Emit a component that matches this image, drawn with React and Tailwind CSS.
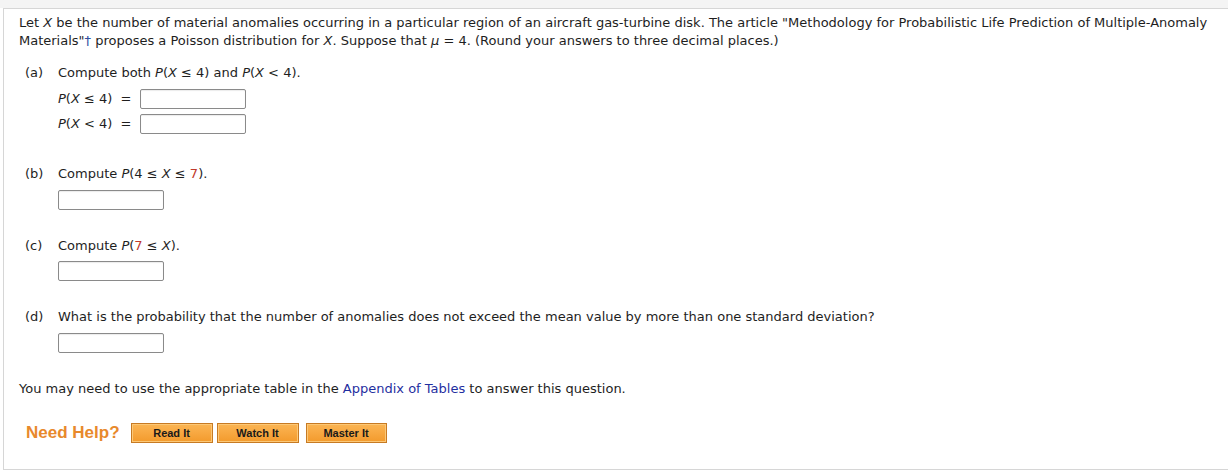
import React from "react";

const V = { fontFamily: '"DejaVu Sans", Verdana, sans-serif' };

function Box({ className = "" }) {
  return (
    <div
      className={
        "h-[20px] w-[106px] border border-[#8a8a8a] rounded-[2px] bg-white shadow-[inset_0_1px_1px_rgba(0,0,0,0.08)] " +
        className
      }
    />
  );
}

function Btn({ children, w, className = "" }) {
  return (
    <div
      className={
        "h-[20px] flex items-center justify-center border border-[#c77a23] bg-gradient-to-b from-[#fbb553] to-[#f39a2b] shadow-[inset_0_0_0_1px_#fcc877] text-[11px] font-bold text-[#1a1a1a] " +
        className
      }
      style={{ width: w, fontFamily: '"Liberation Sans", Arial, sans-serif' }}
    >
      {children}
    </div>
  );
}

export default function App() {
  return (
    <div className="w-[1228px] h-[476px] bg-white text-[#1e1e1e] text-[13px] leading-[18px]" style={V}>
      <div className="h-[8px] bg-[#f4f4f4]" />
      <div className="ml-[3px] h-[462px] border-t border-l border-b border-[#d6d6d6] bg-white">
        <div className="pl-[15px] pt-[5px] pr-[4px]">
          <p>
            Let <i>X</i> be the number of material anomalies occurring in a particular region of an aircraft gas-turbine disk. The article "Methodology for Probabilistic Life Prediction of Multiple-Anomaly Materials"<span className="text-[#3050a0]">†</span> proposes a Poisson distribution for <i>X</i>. Suppose that <i>μ</i> = 4. (Round your answers to three decimal places.)
          </p>
        </div>

        <div className="pl-[21px] mt-[14px]">
          <div className="flex">
            <span className="w-[33px]">(a)</span>
            <span>
              Compute both <i>P</i>(<i>X</i> ≤ 4) and <i>P</i>(<i>X</i> &lt; 4).
            </span>
          </div>
          <div className="pl-[33px] mt-[7px] flex flex-col gap-[5px]">
            <div className="flex items-center">
              <span className="w-[82px]">
                <i>P</i>(<i>X</i> ≤ 4) &nbsp;=
              </span>
              <Box />
            </div>
            <div className="flex items-center">
              <span className="w-[82px]">
                <i>P</i>(<i>X</i> &lt; 4) &nbsp;=
              </span>
              <Box />
            </div>
          </div>

          <div className="flex mt-[31px]">
            <span className="w-[33px]">(b)</span>
            <span>
              Compute <i>P</i>(4 ≤ <i>X</i> ≤ <span className="text-[#c0392b]">7</span>).
            </span>
          </div>
          <Box className="ml-[33px] mt-[7px]" />

          <div className="flex mt-[27px]">
            <span className="w-[33px]">(c)</span>
            <span>
              Compute <i>P</i>(<span className="text-[#c0392b]">7</span> ≤ <i>X</i>).
            </span>
          </div>
          <Box className="ml-[33px] mt-[6px]" />

          <div className="flex mt-[27px]">
            <span className="w-[33px]">(d)</span>
            <span>
              What is the probability that the number of anomalies does not exceed the mean value by more than one standard deviation?
            </span>
          </div>
          <Box className="ml-[33px] mt-[7px]" />
        </div>

        <p className="pl-[15px] mt-[27px]">
          You may need to use the appropriate table in the <span className="text-[#1f2f9f]">Appendix of Tables</span> to answer this question.
        </p>

        <div className="pl-[22px] mt-[25px] flex items-center">
          <span
            className="text-[17px] font-bold text-[#e8892c] mr-[11px]"
            style={{ fontFamily: '"Liberation Sans", Arial, sans-serif' }}
          >
            Need Help?
          </span>
          <div className="flex gap-[4px]">
            <Btn w={82}>Read It</Btn>
            <Btn w={82}>Watch It</Btn>
            <Btn w={81} className="ml-[3px]">Master It</Btn>
          </div>
        </div>
      </div>
    </div>
  );
}
